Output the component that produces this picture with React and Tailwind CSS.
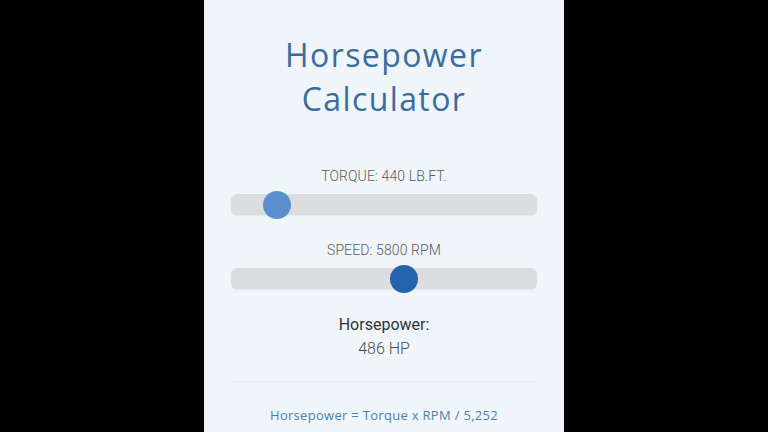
import React, { useState } from 'react';

const Slider = ({ label, value, min, max, thumbColor }) => {
  const pct = ((value - min) / (max - min)) * 100;
  return (
    <div className="flex flex-col items-center">
      <div className="text-[14px] leading-[20px] text-[#5a5a5a] font-['Roboto',sans-serif] font-light tracking-[0.1px]">
        {label}
      </div>
      <div className="relative mt-[8px] w-full h-[21px] rounded-[6px] bg-[#dcdddf] shadow-[0_1px_2px_rgba(0,0,0,0.06)]">
        <div
          className={`absolute top-1/2 w-[28px] h-[28px] -translate-x-1/2 -translate-y-1/2 rounded-full ${thumbColor}`}
          style={{ left: `${pct}%` }}
        />
      </div>
    </div>
  );
};

const App = () => {
  const [torque] = useState(440);
  const [rpm] = useState(5800);
  const hp = Math.round((torque * rpm) / 5252);

  return (
    <div className="w-full h-[432px] bg-black flex justify-center overflow-hidden">
      <div className="w-[360px] h-full bg-[#f0f5f9] flex flex-col px-[27px] pt-[33px]">
        {/* Title */}
        <h1 className="text-center text-[32px] leading-[44px] text-[#3b6c9e] font-['Open_Sans',sans-serif] tracking-[1.4px]">
          Horsepower
          <br />
          Calculator
        </h1>

        <div className="mt-[45px]">
          <Slider label={`TORQUE: ${torque} LB.FT.`} value={torque} min={100} max={2350} thumbColor="bg-[#5b8fcf]" />
        </div>
        <div className="mt-[25px]">
          <Slider label={`SPEED: ${rpm} RPM`} value={rpm} min={1000} max={9510} thumbColor="bg-[#2563ad]" />
        </div>

        {/* Result */}
        <div className="mt-[24px] flex flex-col items-center font-['Roboto',sans-serif]">
          <div className="text-[16px] leading-[24px] text-[#2f3338]">Horsepower:</div>
          <div className="text-[16px] leading-[24px] text-[#4a4d52] font-light">{hp} HP</div>
        </div>

        <div className="mt-[20px] border-t border-[#e6ecf0]" />

        <div className="mt-[23px] text-center text-[13px] leading-[20px] text-[#4f7fae] font-['Open_Sans',sans-serif] tracking-[0.3px]">
          Horsepower = Torque x RPM / 5,252
        </div>
      </div>
    </div>
  );
};

export default App;
